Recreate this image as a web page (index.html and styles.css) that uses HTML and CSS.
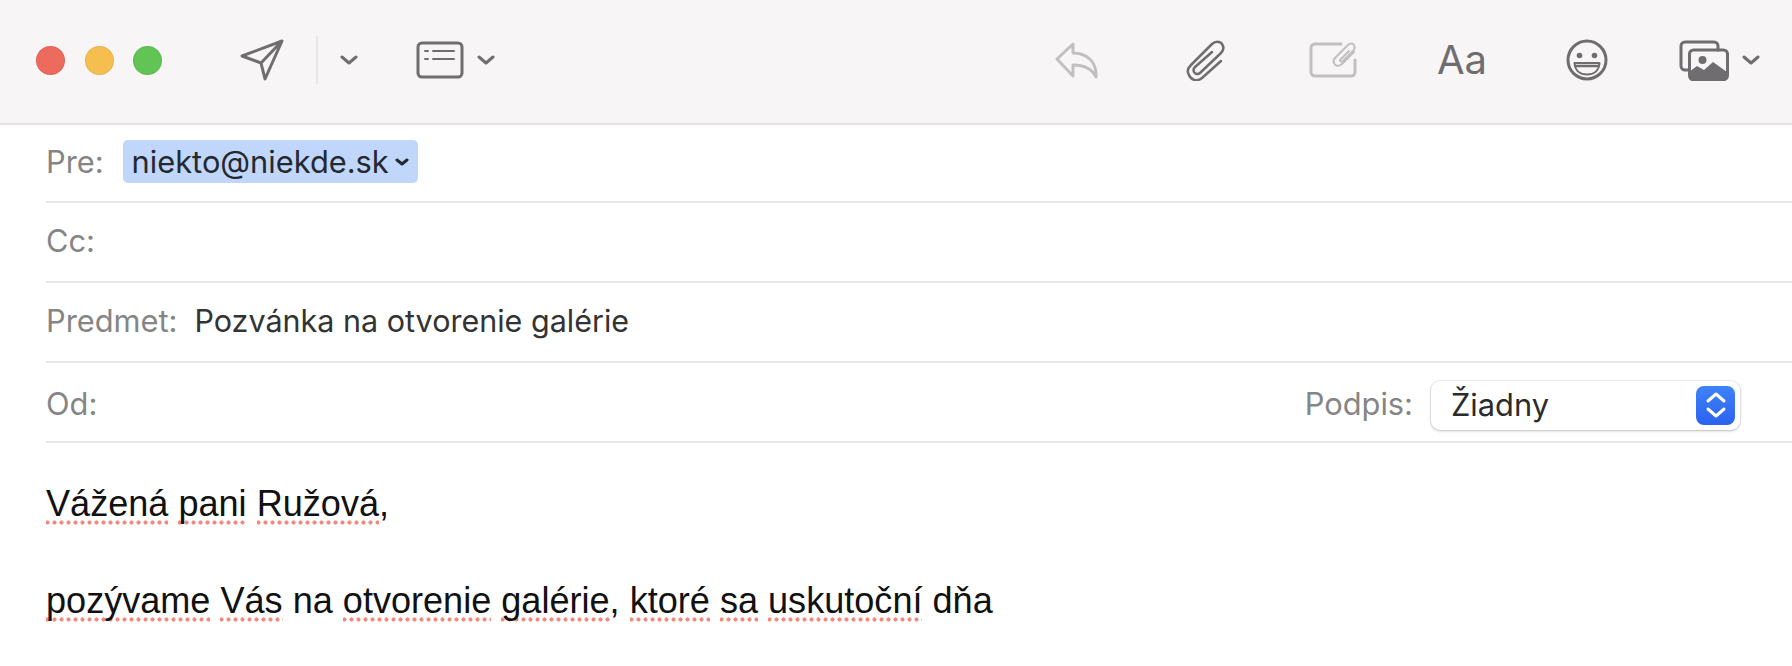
FILE: index.html
```html
<!DOCTYPE html>
<html lang="sk">
<head>
<meta charset="utf-8">
<title>Pozvánka na otvorenie galérie</title>
<link rel="stylesheet" href="styles.css">
</head>
<body>
<div class="window">
  <header class="toolbar">
    <div class="lights">
      <span class="light red"></span>
      <span class="light yellow"></span>
      <span class="light green"></span>
    </div>
    <svg class="icon send" width="46" height="46" viewBox="0 0 46 46"><path d="M43 4 3 19l19 7 4 16z M22 26 43 4"/></svg>
    <span class="divider"></span>
    <svg class="icon chev chev-send" width="18" height="10" viewBox="0 0 18 10"><path d="M2 2l7 6 7-6"/></svg>
    <svg class="icon card" width="48" height="38" viewBox="0 0 48 38"><rect x="2" y="2" width="44" height="34" rx="4"/><path class="thin" d="M9 10h3M9 18h3M17 10h21M17 18h21"/></svg>
    <svg class="icon chev chev-card" width="18" height="10" viewBox="0 0 18 10"><path d="M2 2l7 6 7-6"/></svg>

    <svg class="icon faded reply" width="44" height="42" viewBox="0 0 44 42"><path d="M2 20 18 5v9c13 0 24 8 23 24-4-8-12-12-23-12v11z"/></svg>
    <svg class="icon clip" width="40" height="42" viewBox="0 0 40 42"><path class="mid" d="M35 22 16 39c-5 4-11 2-13-3-2-3-1-7 2-10L26 5c3-3 8-3 10 0s2 6-1 9L14 34c-2 2-5 1-6-1s0-4 1-5l17-15"/></svg>
    <svg class="icon faded attach" width="50" height="42" viewBox="0 0 50 42"><path d="M33 5H7a4 4 0 0 0-4 4v24a4 4 0 0 0 4 4h36a4 4 0 0 0 4-4V21"/><path class="thin" d="M46 13 34 25c-3 3-7 2-8-1-1-2 0-4 1-5l13-13c2-2 5-2 6 0s1 4-1 6L35 22c-1 1-3 1-3-1l9-9"/></svg>
    <span class="font-btn">Aa</span>
    <svg class="icon smile" width="42" height="42" viewBox="0 0 42 42"><circle cx="21" cy="21" r="19"/><circle class="solid" cx="13.500" cy="16.500" r="2.800"/><circle class="solid" cx="28.500" cy="16.500" r="2.800"/><path class="thin" d="M8.500 24h25c-.5 8-6 11.500-12.500 11.500S9 32 8.500 24z"/><path class="mid" d="M10 27h22"/></svg>
    <svg class="icon photo" width="52" height="44" viewBox="0 0 52 44"><path d="M10 32H7a4 4 0 0 1-4-4V8a4 4 0 0 1 4-4h29a4 4 0 0 1 4 4v4"/><rect x="11.500" y="12" width="38" height="29.500" rx="4"/><circle class="solid" cx="24.500" cy="22" r="4"/><path class="solid" d="M11 34l8-6 7 4 9-8 14 10v5a4 4 0 0 1-4 4H15a4 4 0 0 1-4-4z"/></svg>
    <svg class="icon chev chev-photo" width="18" height="10" viewBox="0 0 18 10"><path d="M2 2l7 6 7-6"/></svg>
  </header>

  <section class="fields">
    <div class="row row-to">
      <span class="label">Pre:</span>
      <span class="chip">niekto@niekde.sk<svg class="chip-chev" width="14" height="8" viewBox="0 0 14 8"><path d="M2 2l5 4 5-4"/></svg></span>
    </div>
    <div class="row">
      <span class="label">Cc:</span>
    </div>
    <div class="row">
      <span class="label">Predmet:</span>
      <span class="subject">Pozvánka na otvorenie galérie</span>
    </div>
    <div class="row row-from">
      <span class="label">Od:</span>
      <span class="label sig-label">Podpis:</span>
      <div class="select">
        <span class="select-value">Žiadny</span>
        <span class="stepper">
          <svg width="22" height="30" viewBox="0 0 22 30"><path d="M3 11l8-7 8 7M3 19l8 7 8-7"/></svg>
        </span>
      </div>
    </div>
  </section>

  <main class="message">
    <p><span class="sp">Vážená</span> <span class="sp">pani</span> <span class="sp">Ružová</span>,</p>
    <p><span class="sp">pozývame</span> <span class="sp">Vás</span> na <span class="sp">otvorenie</span> <span class="sp">galérie</span>, <span class="sp">ktoré</span> <span class="sp">sa</span> <span class="sp">uskutoční</span> dňa</p>
  </main>
</div>
</body>
</html>
```

FILE: styles.css
```css
* { box-sizing: border-box; }

html, body {
  margin: 0;
  height: 100%;
  background: #fff;
}

.window {
  height: 666px;
  overflow: hidden;
  font-family: Inter, "Noto Sans", sans-serif;
  background: #fff;
}

/* Toolbar */
.toolbar {
  display: flex;
  align-items: center;
  height: 125px;
  padding: 0 32px 3px 36px;
  background: #f8f5f6;
  border-bottom: 2px solid #e3e1e2;
}

.lights { display: flex; gap: 19.500px; }

.light {
  width: 29px;
  height: 29px;
  border-radius: 50%;
  border: 1px solid rgba(0, 0, 0, .06);
}
.red { background: #ec6a5e; }
.yellow { background: #f4bf4f; }
.green { background: #61c454; }

.icon { flex: none; display: block; }
.icon path, .icon rect, .icon circle {
  fill: none;
  stroke: #6f6d6f;
  stroke-width: 3;
  stroke-linecap: round;
  stroke-linejoin: round;
}
.icon .thin { stroke-width: 2; }
.icon .mid { stroke-width: 2.5; }
.icon .solid { fill: #6f6d6f; stroke: none; }
.faded path { stroke: #c1bfc1; }

.send { margin-left: 77px; }
.divider {
  flex: none;
  width: 2px;
  height: 48px;
  margin-left: 31px;
  background: #e8e6e7;
}
.chev-send { margin-left: 22px; }
.card { margin-left: 58px; }
.chev-card { margin-left: 13px; }
.reply { margin-left: auto; }
.clip { margin-left: 87px; }
.attach { margin-left: 82px; }
.font-btn {
  margin-left: 79px;
  font-size: 40px;
  line-height: 1;
  color: #6f6d6f;
}
.smile { margin-left: 79px; }
.photo { margin-left: 70px; }
.chev-photo { margin-left: 12px; }

/* Header fields */
.fields { margin-left: 46px; }

.row {
  display: flex;
  align-items: center;
  height: 80px;
  border-bottom: 2px solid #e6e6e6;
}
.row-to { height: 78px; }
.row-from { padding: 6px 52px 0 0; }

.label {
  margin-bottom: 4px;
  font-size: 30.800px;
  color: #858585;
}

.chip {
  display: flex;
  align-items: center;
  height: 43px;
  margin-bottom: 3px;
  margin-left: 19px;
  padding: 0 9px;
  font-size: 30.800px;
  color: #24292f;
  background: #c0d7fb;
  border-radius: 5px;
}
.chip-chev { margin-left: 6px; }
.chip-chev path {
  fill: none;
  stroke: #24292f;
  stroke-width: 3;
  stroke-linecap: round;
  stroke-linejoin: round;
}

.subject {
  margin-bottom: 4px;
  margin-left: 17px;
  font-size: 30.500px;
  color: #333;
}

.sig-label { margin-left: auto; }

.select {
  display: flex;
  align-items: center;
  justify-content: space-between;
  width: 309px;
  height: 49px;
  margin-left: 18px;
  padding: 0 5px 0 20px;
  background: #fff;
  border-radius: 9px;
  box-shadow: 0 0 0 1px rgba(0, 0, 0, .06), 0 1px 3px rgba(0, 0, 0, .22);
}
.select-value {
  margin-bottom: 2px;
  font-size: 30.800px;
  color: #2b2b2b;
}
.stepper {
  display: flex;
  align-items: center;
  justify-content: center;
  width: 39px;
  height: 39px;
  border-radius: 8px;
  background: linear-gradient(#3f83f8, #2a62ee);
}
.stepper path {
  fill: none;
  stroke: #fff;
  stroke-width: 3;
  stroke-linecap: round;
  stroke-linejoin: round;
}

/* Message body */
.message {
  padding: 36px 0 0 46px;
  font-family: "Liberation Sans", Arial, sans-serif;
  font-size: 36.100px;
  line-height: 49px;
  color: #111;
}
.message p { margin: 0 0 48px; }

.sp {
  padding-bottom: 1px;
  background-image: radial-gradient(circle at center, #f2887e 1.700px, transparent 2.400px);
  background-repeat: repeat-x;
  background-size: 7px 5px;
  background-position: -2px 100%;
}
```
